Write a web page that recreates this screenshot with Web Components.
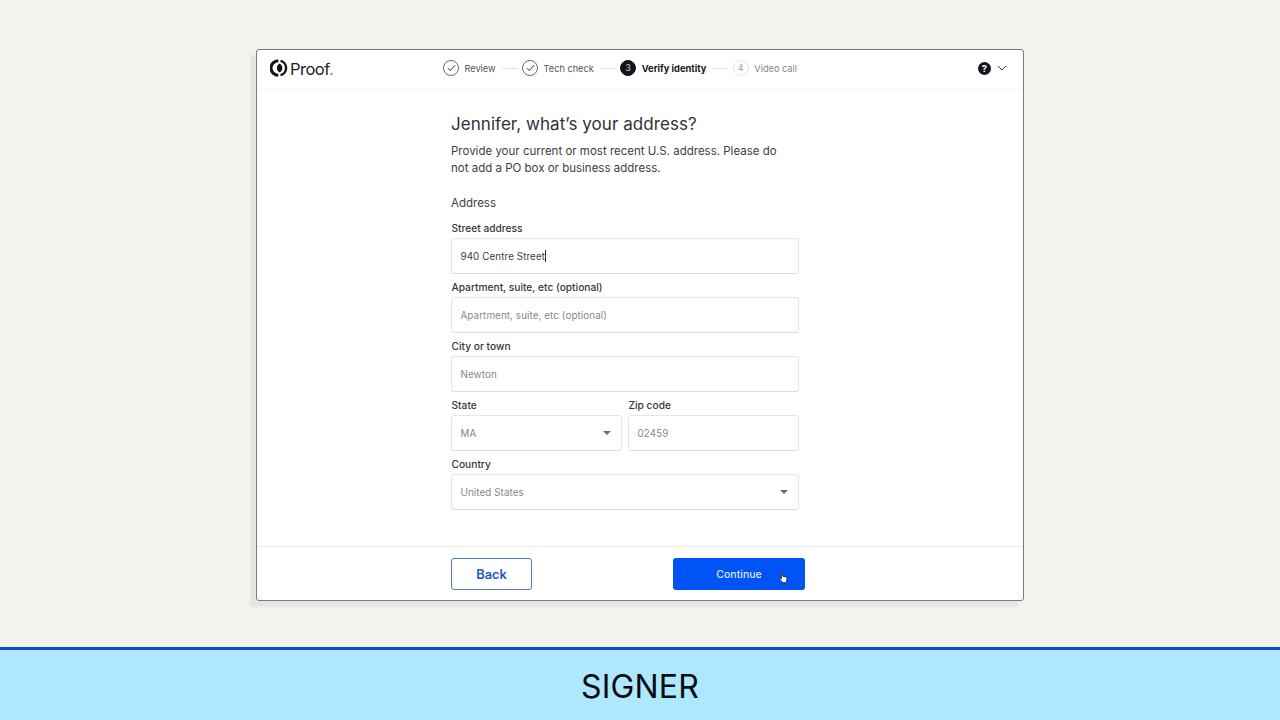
<!DOCTYPE html>
<html lang="en">
<head>
<meta charset="utf-8">
<title>Proof - Verify identity</title>
<style>
  html, body { margin: 0; height: 100%; }
  body { font-family: Inter, "Liberation Sans", sans-serif; background: #f2f2ee; }
</style>
</head>
<body>
<signer-page>
  <proof-window>
    <proof-header slot="header">
      <proof-step state="done" label="Review"></proof-step>
      <proof-step state="done" label="Tech check"></proof-step>
      <proof-step state="current" num="3" label="Verify identity"></proof-step>
      <proof-step state="todo" num="4" label="Video call"></proof-step>
    </proof-header>
    <address-form>
      <form-field label="Street address" value="940 Centre Street" strong caret></form-field>
      <form-field label="Apartment, suite, etc (optional)" value="Apartment, suite, etc (optional)"></form-field>
      <form-field label="City or town" value="Newton"></form-field>
      <div class="row" style="display:flex;gap:6px">
        <form-field style="width:171px;flex:none" label="State" value="MA" select></form-field>
        <form-field style="flex:1" label="Zip code" value="02459"></form-field>
      </div>
      <form-field label="Country" value="United States" select></form-field>
    </address-form>
    <proof-footer slot="footer"></proof-footer>
  </proof-window>
  <role-banner slot="banner">SIGNER</role-banner>
</signer-page>

<script>
class SignerPage extends HTMLElement {
  constructor() {
    super();
    this.attachShadow({ mode: "open" }).innerHTML = `
      <style>
        :host { display: flex; flex-direction: column; height: 720px; overflow: hidden; }
        .stage { flex: 1; padding-top: 49px; display: flex; justify-content: center; align-items: flex-start; }
      </style>
      <div class="stage"><slot></slot></div>
      <slot name="banner"></slot>`;
  }
}

class ProofWindow extends HTMLElement {
  constructor() {
    super();
    this.attachShadow({ mode: "open" }).innerHTML = `
      <style>
        :host {
          display: flex; flex-direction: column; box-sizing: border-box;
          width: 768px; height: 552px; background: #fff;
          border: 1px solid #7b7b77; border-radius: 3px;
          box-shadow: -6px 6px 2px 0 #e4e4e0;
        }
        main { flex: 1; }
      </style>
      <slot name="header"></slot>
      <main><slot></slot></main>
      <slot name="footer"></slot>`;
  }
}

class ProofHeader extends HTMLElement {
  constructor() {
    super();
    this.attachShadow({ mode: "open" }).innerHTML = `
      <style>
        :host {
          display: flex; align-items: center; box-sizing: border-box; height: 40px;
          padding: 0 16px 3px 13px; border-bottom: 1px solid #f6f6f5;
        }
        .logo { display: flex; align-items: center; gap: 2px; width: 173px; flex: none; color: #22242a; font-size: 16.5px; letter-spacing: -.5px; }
        .logo b { font-weight: 400; }
        .logo i { font-style: normal; color: #8a8a8a; margin-left: -1px; }
        .logo span { position: relative; top: 1px; }
        .steps { display: flex; align-items: center; }
        .help { margin-left: auto; display: flex; align-items: center; gap: 6px; }
        .q { width: 13px; height: 13px; border-radius: 50%; background: #12141c; color: #fff; font-size: 9.5px; font-weight: 700; display: flex; align-items: center; justify-content: center; }
      </style>
      <div class="logo">
        <svg width="18" height="18" viewBox="0 0 18 18">
          <path d="M8.300 1.700A7.300 7.300 0 0 0 8.300 16.300" fill="none" stroke="#12141c" stroke-width="3"/>
          <path d="M10.500 1.900A7.300 7.300 0 0 1 10.500 16.100" fill="none" stroke="#12141c" stroke-width="2.400"/>
          <path d="M9.600 4.400C11.700 5.600 12.300 7.500 12.300 9S11.700 12.400 9.600 13.600C7.500 12.400 6.900 10.500 6.900 9S7.500 5.600 9.600 4.400Z" fill="#12141c"/>
        </svg>
        <span><b>Proof</b><i>.</i></span>
      </div>
      <div class="steps"><slot></slot></div>
      <div class="help">
        <span class="q">?</span>
        <svg width="10" height="6" viewBox="0 0 10 6"><path d="M1 1l4 4 4-4" fill="none" stroke="#3a3a3e" stroke-width="1"/></svg>
      </div>`;
  }
}

class ProofStep extends HTMLElement {
  connectedCallback() {
    if (this.shadowRoot) return;
    const state = this.getAttribute("state");
    const first = this.previousElementSibling === null;
    const mark = state === "done"
      ? `<svg width="9" height="8" viewBox="0 0 9 8"><path d="M1 4.200l2.300 2.400L8 1.200" fill="none" stroke="#2c2e33" stroke-width="1"/></svg>`
      : this.getAttribute("num");
    this.attachShadow({ mode: "open" }).innerHTML = `
      <style>
        :host { display: flex; align-items: center; font-size: 9.2px; color: #54565b; white-space: nowrap; }
        .line { width: 15.5px; height: 1px; background: #e0e0de; margin: 0 5px 0 6px; }
        .dot {
          box-sizing: border-box; width: 16px; height: 16px; border-radius: 50%;
          border: 1px solid #6a6c70; display: flex; align-items: center; justify-content: center;
          font-size: 8.500px; margin-right: 5.500px;
        }
        :host([state=current]) { color: #14161d; font-weight: 700; font-size: 9.300px; }
        :host([state=current]) .dot { background: #12141c; border-color: #12141c; color: #c9c9cc; font-weight: 500; }
        :host([state=todo]) { color: #85878b; }
        :host([state=todo]) .dot { border-color: #e4e4e2; color: #9a9a9d; }
      </style>
      ${first ? "" : `<span class="line"></span>`}
      <span class="dot">${mark}</span><span>${this.getAttribute("label")}</span>`;
  }
}

class AddressForm extends HTMLElement {
  constructor() {
    super();
    this.attachShadow({ mode: "open" }).innerHTML = `
      <style>
        :host { display: block; width: 348px; margin-left: 194px; padding-top: 23px; color: #2d2f34; }
        h1 { margin: 0; font-size: 17px; line-height: 23px; font-weight: 400; color: #303238; letter-spacing: .05px; }
        p { margin: 7px 0 0; max-width: 335px; font-size: 11.500px; line-height: 17px; color: #3c3e43; }
        h2 { margin: 18px 0 0; font-size: 11.500px; line-height: 17px; font-weight: 400; color: #3c3e43; }
        .fields { display: flex; flex-direction: column; gap: 5px; margin-top: 8px; }
      </style>
      <h1>Jennifer, what’s your address?</h1>
      <p>Provide your current or most recent U.S. address. Please do not add a PO box or business address.</p>
      <h2>Address</h2>
      <div class="fields"><slot></slot></div>`;
  }
}

class FormField extends HTMLElement {
  connectedCallback() {
    if (this.shadowRoot) return;
    const strong = this.hasAttribute("strong");
    this.attachShadow({ mode: "open" }).innerHTML = `
      <style>
        :host { display: block; }
        label { display: block; height: 18px; line-height: 17px; font-size: 10.200px; font-weight: 500; color: #34363b; padding-left: .5px; }
        .box {
          box-sizing: border-box; height: 36px; display: flex; align-items: center; justify-content: space-between;
          padding: 0 10px 0 8.500px; border: 1px solid #e6e6e5; border-bottom-color: #dcdcdb; border-radius: 3px;
          font-size: 9.800px; letter-spacing: .1px; color: ${strong ? "#3b3d42" : "#85878b"}; background: #fff;
        }
        .caret { display: inline-block; width: 1px; height: 12px; background: #2c2e33; vertical-align: -2px; }
        .arrow { width: 0; height: 0; border: 4px solid transparent; border-top: 4.500px solid #6e6e72; border-bottom: 0; }
      </style>
      <label>${this.getAttribute("label")}</label>
      <div class="box">
        <span>${this.getAttribute("value")}${this.hasAttribute("caret") ? `<span class="caret"></span>` : ""}</span>
        ${this.hasAttribute("select") ? `<span class="arrow"></span>` : ""}
      </div>`;
  }
}

class ProofFooter extends HTMLElement {
  constructor() {
    super();
    this.attachShadow({ mode: "open" }).innerHTML = `
      <style>
        :host {
          display: flex; box-sizing: border-box; height: 54px; position: relative;
          padding: 11px 218px 0 194px; justify-content: space-between;
          border-top: 1px solid #ecedec;
        }
        span {
          box-sizing: border-box; height: 32px; border-radius: 3px; display: flex; align-items: center; justify-content: center;
        }
        .back { width: 81px; border: 1px solid #4a7cc8; color: #2159b8; font-size: 12.800px; font-weight: 600; }
        .next { width: 132px; background: #0053f5; color: #dfe9fb; font-size: 10.500px; font-weight: 500; }
        svg { position: absolute; left: 522px; top: 25px; }
      </style>
      <span class="back">Back</span>
      <span class="next">Continue</span>
      <svg width="9" height="12" viewBox="0 0 9 12">
        <path d="M2.400 1.200c0-.9 1.300-.9 1.300 0v3l3.400.9c.8.3 1 .8.900 1.500L7.500 9.700c-.1.600-.5 1-1 1H4.100c-.4 0-.7-.2-1-.5L.8 7.300c-.6-.8.300-1.500 1-1l.6.600Z" fill="#fff" stroke="#15171c" stroke-width=".8"/>
      </svg>`;
  }
}

class RoleBanner extends HTMLElement {
  constructor() {
    super();
    this.attachShadow({ mode: "open" }).innerHTML = `
      <style>
        :host {
          display: flex; align-items: center; justify-content: center; box-sizing: border-box;
          height: 73px; padding-top: 2px; background: #aee8fe; border-top: 3px solid #0d4fc4;
          color: #0a0c12; font-size: 32px; letter-spacing: .2px;
        }
      </style>
      <slot></slot>`;
  }
}

customElements.define("signer-page", SignerPage);
customElements.define("proof-window", ProofWindow);
customElements.define("proof-header", ProofHeader);
customElements.define("proof-step", ProofStep);
customElements.define("address-form", AddressForm);
customElements.define("form-field", FormField);
customElements.define("proof-footer", ProofFooter);
customElements.define("role-banner", RoleBanner);
</script>
</body>
</html>
